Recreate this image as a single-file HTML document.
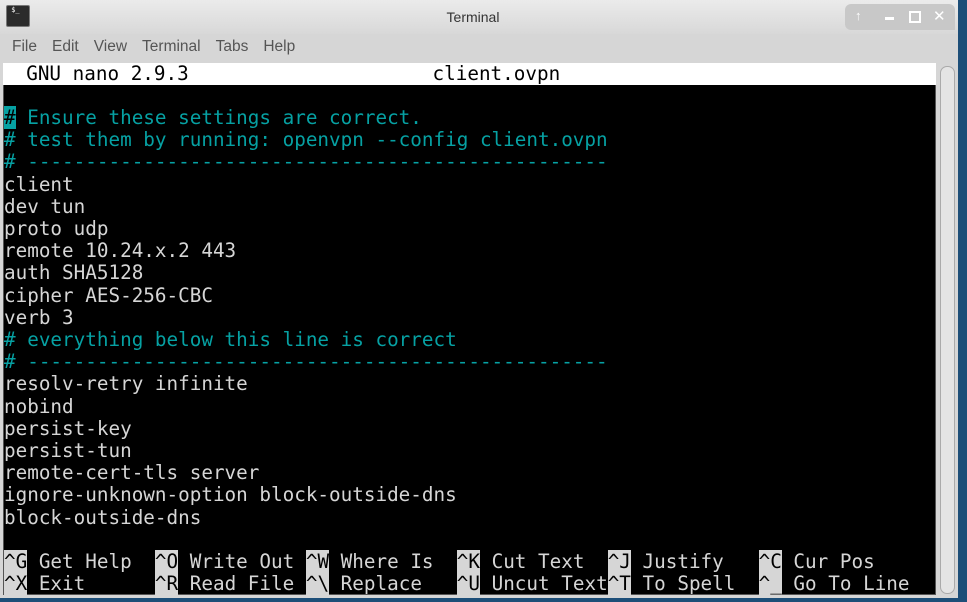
<!DOCTYPE html><html><head><style>
body{margin:0;width:967px;height:602px;overflow:hidden;background:#1d4e78;font-family:"Liberation Sans","DejaVu Sans",sans-serif;position:relative}
#win{position:absolute;left:0;top:0;width:958px;height:598px;background:#d6d6d6}
#tb{position:absolute;left:0;top:0;width:958px;height:34px;background:linear-gradient(#ebebeb,#d8d8d8)}
#tb .t{position:absolute;left:0;width:946px;top:9px;text-align:center;font-size:14px;color:#333}
#ico{position:absolute;left:6px;top:5px;width:22px;height:20px;background:#2b2b2b;border:1px solid #777;border-radius:2px;color:#fff;font:7px "DejaVu Sans Mono",monospace}
#btns{position:absolute;left:845px;top:4px;width:110px;height:26px;background:#c8c8c8;border-radius:6px 6px 0 6px;color:#fff;font-size:13px;font-weight:bold}
#menu{position:absolute;top:38px;left:12px;font-size:15.5px;color:#555}
#menu span{margin-right:15px}
#term{position:absolute;left:3px;top:63px;width:933px;height:532px;background:#000;border:1px solid #555;box-sizing:border-box}
#sb{position:absolute;left:940px;top:66px;width:15px;height:528px;border:1px solid #aaa;border-radius:7px;background:#e4e4e4;box-sizing:border-box}
pre{margin:0;position:absolute;left:4px;font:19.3px/22.2px "DejaVu Sans Mono",monospace;color:#d6d6d6;white-space:pre}
.c{color:#06a1a3}.inv{background:#d6d6d6;color:#000}.ci{background:#06a1a3;color:#000}
</style></head><body>
<div id="win">
<div id="tb"><div id="ico">&nbsp;$_</div><div class="t">Terminal</div>
<div id="btns"><span style="position:absolute;left:10px;top:4px">↑</span><span style="position:absolute;left:40px;top:13px;width:9px;height:3px;background:#fff"></span><span style="position:absolute;left:64px;top:7px;width:8px;height:8px;border:2px solid #fff"></span><span style="position:absolute;left:88px;top:3px;font-size:15px">✕</span></div></div>
<div id="menu"><span>File</span><span>Edit</span><span>View</span><span>Terminal</span><span>Tabs</span><span>Help</span></div>
<div id="term"></div>
<div id="sb"></div>
</div>
<pre style="top:63px;left:3px;width:933px;background:#fff;color:#000">  GNU nano 2.9.3                     client.ovpn</pre>
<pre style="top:107px"><span class="ci">#</span><span class="c"> Ensure these settings are correct.
# test them by running: openvpn --config client.ovpn
# --------------------------------------------------</span>
client
dev tun
proto udp
remote 10.24.x.2 443
auth SHA5128
cipher AES-256-CBC
verb 3
<span class="c"># everything below this line is correct
# --------------------------------------------------</span>
resolv-retry infinite
nobind
persist-key
persist-tun
remote-cert-tls server
ignore-unknown-option block-outside-dns
block-outside-dns

<span class="inv">^G</span> Get Help  <span class="inv">^O</span> Write Out <span class="inv">^W</span> Where Is  <span class="inv">^K</span> Cut Text  <span class="inv">^J</span> Justify   <span class="inv">^C</span> Cur Pos
<span class="inv">^X</span> Exit      <span class="inv">^R</span> Read File <span class="inv">^\</span> Replace   <span class="inv">^U</span> Uncut Text<span class="inv">^T</span> To Spell  <span class="inv">^_</span> Go To Line</pre>
</body></html>
